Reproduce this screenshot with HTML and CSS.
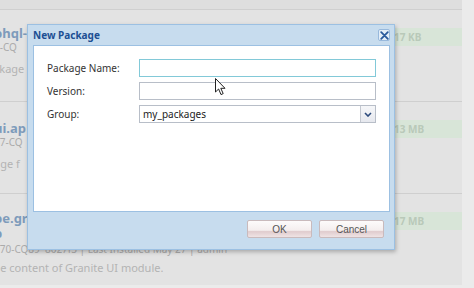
FILE: index.html
```html
<!DOCTYPE html>
<html lang="en">
<head>
    <meta charset="UTF-8">
    <title>New Package</title>
    <link rel="stylesheet" href="styles.css">
</head>
<body>
    <div class="topbar"></div>

    <div class="list">
        <div class="row">
            <div class="info">
                <div class="name">phql-</div>
                <div class="meta">1-CQ</div>
                <div class="desc">ckage f</div>
            </div>
            <div class="size">17 KB</div>
        </div>
        <div class="row">
            <div class="info">
                <div class="name">ui.ap</div>
                <div class="meta">47-CQ</div>
                <div class="desc">age f</div>
            </div>
            <div class="size">13 MB</div>
        </div>
        <div class="row">
            <div class="info">
                <div class="name">be.gr<br>p</div>
                <div class="meta">870-CQ89 &nbsp;8027f3 | Last Installed May 27 | admin</div>
                <div class="desc">ee content of Granite UI module.</div>
            </div>
            <div class="size">17 MB</div>
        </div>
    </div>

    <div class="dialog">
        <div class="dialog-head">
            <span class="dialog-title">New Package</span>
            <span class="close">
                <svg width="9" height="9" viewBox="0 0 9 9"><path d="M1.2 1.2L7.8 7.8M7.8 1.2L1.2 7.8" stroke="#2a5a9c" stroke-width="1.8" stroke-linecap="round"/></svg>
            </span>
        </div>
        <div class="dialog-body">
            <div class="form">
                <label>Package Name:</label>
                <div class="field focus"></div>
                <label>Version:</label>
                <div class="field"></div>
                <label>Group:</label>
                <div class="field select">
                    <span class="value">my_packages</span>
                    <span class="trigger">
                        <svg width="8" height="5" viewBox="0 0 8 5"><path d="M1 1L4 4L7 1" fill="none" stroke="#2c4a7c" stroke-width="1.6"/></svg>
                    </span>
                </div>
            </div>
        </div>
        <div class="dialog-foot">
            <button class="btn">OK</button>
            <button class="btn">Cancel</button>
        </div>
    </div>

    <svg class="cursor" width="12" height="18" viewBox="0 0 12 18">
        <path d="M0.5 0.5L0.5 14L3.6 11L6 16.6L8.2 15.6L5.8 10.3L10 10.3Z" fill="#fff" stroke="#222" stroke-width="1"/>
    </svg>
</body>
</html>
```

FILE: styles.css
```css
*{
    margin: 0;
    padding: 0;
    box-sizing: border-box;
}
body{
    width: 474px;
    height: 288px;
    overflow: hidden;
    background-color: #ebebeb;
    font-family: "Noto Sans", sans-serif;
}
.topbar{
    width: 462px;
    height: 9px;
    background-color: #dedede;
}
.list{
    width: 462px;
    background-color: #e3e3e3;
}
.row{
    display: flex;
    justify-content: space-between;
    height: 92px;
    border-top: 1px solid #cfcfcf;
    overflow: hidden;
}
.info{
    margin-left: -6px;
    padding-top: 16px;
    white-space: nowrap;
}
.name{
    font-size: 13px;
    line-height: 15px;
    font-weight: bold;
    color: #7e9bbb;
}
.meta{
    font-size: 10px;
    line-height: 13px;
    color: #ababab;
}
.desc{
    margin-top: 8px;
    font-size: 11px;
    line-height: 13px;
    color: #b3b3b3;
}
.row:nth-child(2) .info{
    padding-top: 19px;
}
.row:nth-child(3) .info{
    padding-top: 17px;
}
.row:nth-child(3) .meta{
    margin-top: 2px;
}
.row:nth-child(3) .desc{
    margin-top: 5px;
}
.size{
    width: 80px;
    height: 18px;
    margin-top: 18px;
    padding-left: 12px;
    background-color: #d8e5d8;
    font-size: 10px;
    line-height: 18px;
    font-weight: bold;
    color: #b9c9b9;
}

/* janela */
.dialog{
    position: absolute;
    left: 27px;
    top: 24px;
    width: 368px;
    height: 226px;
    background-color: #c7dcee;
    border: 1px solid #9cc0e2;
    box-shadow: 1px 2px 4px rgba(0, 0, 0, 0.25);
    display: flex;
    flex-direction: column;
}
.dialog-head{
    height: 20px;
    display: flex;
    align-items: center;
    justify-content: space-between;
    padding: 0 4px 0 5px;
}
.dialog-title{
    font-size: 10px;
    font-weight: bold;
    color: #1d4f93;
}
.close{
    width: 12px;
    height: 12px;
    display: flex;
    align-items: center;
    justify-content: center;
    background-color: #e4eef8;
    border: 1px solid #98b9dc;
    border-radius: 2px;
}
.dialog-body{
    height: 167px;
    margin: 0 4px 0 5px;
    padding: 13px;
    background-color: #fff;
    border: 1px solid #9cc0e2;
}
.form{
    display: grid;
    grid-template-columns: 92px 1fr;
    grid-auto-rows: 18px;
    row-gap: 5px;
    align-items: center;
}
.form label{
    font-size: 10px;
    color: #333;
}
.field{
    height: 18px;
    border: 1px solid #b8bec8;
    background-color: #fff;
}
.field.focus{
    border-color: #82c9d8;
}
.select{
    display: flex;
    align-items: center;
    justify-content: space-between;
}
.select .value{
    padding-left: 3px;
    font-size: 10px;
    color: #222;
}
.trigger{
    width: 15px;
    height: 100%;
    display: flex;
    align-items: center;
    justify-content: center;
    border-left: 1px solid #c4c8d0;
    background: linear-gradient(#f6f7f9, #e6e8ee);
}
.dialog-foot{
    display: flex;
    justify-content: flex-end;
    gap: 7px;
    padding: 8px 10px 0 0;
}
.btn{
    width: 65px;
    height: 18px;
    font-family: "Liberation Sans", Arial, sans-serif;
    font-size: 10px;
    color: #555;
    border: 1px solid #c9babc;
    border-radius: 2px;
    background: linear-gradient(#fdfbfb 0%, #f4eeee 58%, #e0ccce 66%, #efe3e4 100%);
}
.cursor{
    position: absolute;
    left: 215px;
    top: 78px;
}
```
